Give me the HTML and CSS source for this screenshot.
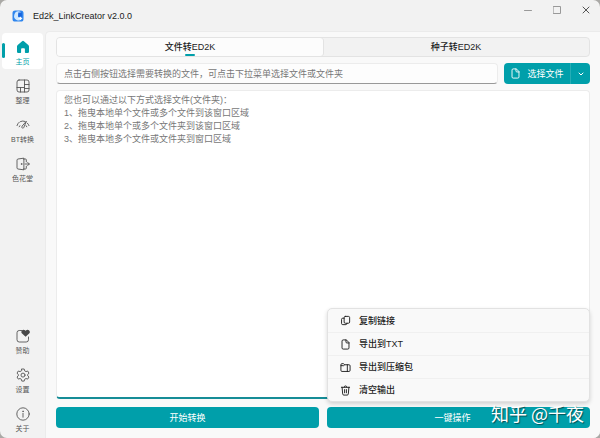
FILE: index.html
```html
<!DOCTYPE html>
<html lang="zh-CN">
<head>
<meta charset="utf-8">
<meta name="viewport" content="width=device-width, initial-scale=1">
<title>Ed2k_LinkCreator v2.0.0</title>
<link rel="stylesheet" href="styles.css">
</head>
<body>
<div class="window">
  <header class="titlebar">
    <svg class="logo" viewBox="0 0 12 12" aria-hidden="true">
      <rect x="0.500" y="0.500" width="11" height="11" rx="2.600" fill="#2f86ee"/>
      <path d="M7.500 1.500A4.500 4.500 0 1 0 10.300 8.500L8.600 7.300H6.200V4.200h2.500V2z" fill="#cfe8ff"/>
      <path d="M6.200 2.600h3.600v4.200H6.200z" fill="#1763dc"/>
      <path d="M8.500 7.200v2.300M6.800 8.300h3" stroke="#fff" stroke-width=".9"/>
    </svg>
    <h1 class="title">Ed2k_LinkCreator v2.0.0</h1>
    <div class="controls">
      <button type="button" class="control" aria-label="最小化"><svg viewBox="0 0 8 8"><path d="M.5 4.500h7" stroke="#999"/></svg></button>
      <button type="button" class="control" aria-label="最大化"><svg viewBox="0 0 8 8"><path d="M.500.500h7v7h-7z" stroke="#999"/></svg></button>
      <button type="button" class="control" aria-label="关闭"><svg viewBox="0 0 8 8"><path d="M1 1l6 6M7 1L1 7" stroke="#555"/></svg></button>
    </div>
  </header>
  <div class="body">
    <nav class="sidebar">
      <button type="button" class="nav active">
        <svg viewBox="0 0 14 14"><path d="M6.100 1.200q.9-.8 1.800 0L12.300 5q.7.600.7 1.400v5.400q0 1.200-1.200 1.200H9.600q-.7 0-.7-.7V9.200q0-.9-.9-.9H6q-.9 0-.9.9v3.100q0 .7-.7.7H2.200Q1 13 1 11.800V6.400q0-.8.7-1.400z" fill="#009faa" stroke="none"/></svg>
        <span>主页</span>
      </button>
      <button type="button" class="nav">
        <svg viewBox="0 0 14 14"><rect x="1" y="1" width="12" height="12" rx="2"/><path d="M8.500 1v12M1 8.500h7.500M4.500 8.500V13M8.500 5.500H13M8.500 9.500H13"/></svg>
        <span>整理</span>
      </button>
      <button type="button" class="nav">
        <svg viewBox="0 0 14 14"><path d="M1 7.600q.7-2.300 2.300-3.500M4.500 3.500q2.200-1 4.500-.1M11.300 5.100q1.200 1 1.700 2.500M3.200 8.800l.7-1.100M10.800 8.800l-.7-1.100M10.200 3.600L7.900 9.300q-.5 1.200-1.500.8-1-.5-.5-1.600z"/></svg>
        <span>BT转换</span>
      </button>
      <button type="button" class="nav">
        <svg viewBox="0 0 14 14"><path d="M7.500 1.200L2 2q-1 .2-1 1.100v7.800q0 .9 1 1.100l5.500.8zM7.500 2h2q.8 0 .8.800v2M7.500 12h2q.8 0 .8-.8v-2M9 7h4.300M11.700 5.400L13.300 7l-1.600 1.600"/><circle cx="5.500" cy="7" r=".4"/></svg>
        <span>色花堂</span>
      </button>
      <button type="button" class="nav lower">
        <svg viewBox="0 0 14 14"><path d="M6 1.500H3.200Q1 1.500 1 3.700v7Q1 13 3.200 13h7q2.300 0 2.300-2.300V8"/><path d="M9.600 7.700L5.800 4.200Q4.800 2.700 6 1.400 7.700 0 9.600 1.800q1.900-1.800 3.600-.4 1.200 1.300.2 2.800z" fill="#484848" stroke="none"/></svg>
        <span>赞助</span>
      </button>
      <button type="button" class="nav low">
        <svg viewBox="0 0 14 14"><path d="M5.800 1h2.400l.4 1.800 1.400.8 1.700-.6 1.300 2.200L11.700 6.400v1.400L13 9l-1.300 2.100-1.700-.6-1.400.8-.4 1.800H5.800l-.4-1.800-1.400-.8-1.700.6L1 9l1.300-1.200V6.400L1 5.200 2.300 3l1.700.6 1.400-.8z"/><circle cx="7" cy="7.100" r="2"/></svg>
        <span>设置</span>
      </button>
      <button type="button" class="nav low">
        <svg viewBox="0 0 14 14"><circle cx="7" cy="7" r="6.200"/><path d="M7 6.300v3.900"/><circle cx="7" cy="4.300" r=".3"/></svg>
        <span>关于</span>
      </button>
    </nav>
    <main class="content">
      <div class="tabs" role="tablist">
        <button type="button" class="tab selected" role="tab" aria-selected="true">文件转ED2K</button>
        <button type="button" class="tab" role="tab" aria-selected="false">种子转ED2K</button>
      </div>
      <div class="picker">
        <input class="path" type="text" aria-label="文件路径" placeholder="点击右侧按钮选择需要转换的文件，可点击下拉菜单选择文件或文件夹">
        <div class="split">
          <button type="button" class="choose">
            <svg viewBox="0 0 12 12"><path d="M6.500 1H3.500Q2.200 1 2.200 2.300v7.400Q2.200 11 3.500 11h5q1.300 0 1.300-1.300V4.300zM6.500 1v2.300q0 1 1 1h2.300"/></svg>
            <span>选择文件</span>
          </button>
          <button type="button" class="more" aria-label="更多"><svg viewBox="0 0 8 8"><path d="M2 3l2 2 2-2"/></svg></button>
        </div>
      </div>
      <textarea class="output" aria-label="输出" placeholder="您也可以通过以下方式选择文件(文件夹)：&#10;1、拖曳本地单个文件或多个文件到该窗口区域&#10;2、拖曳本地单个或多个文件夹到该窗口区域&#10;3、拖曳本地多个文件或文件夹到窗口区域"></textarea>
      <div class="actions">
        <button type="button" class="action">开始转换</button>
        <div class="action-menu">
          <button type="button" class="action with-menu">一键操作</button>
          <div class="menu" role="menu">
            <button type="button" class="item" role="menuitem"><svg viewBox="0 0 12 12"><rect x="4.500" y="1.500" width="6" height="7.500" rx="1.300"/><path d="M4.500 3.500H3q-1.300 0-1.300 1.300v4.400q0 1.300 1.300 1.300h3.500q1 0 1.200-1.500"/></svg>复制链接</button>
            <button type="button" class="item" role="menuitem"><svg viewBox="0 0 12 12"><path d="M6.500 1H3.500Q2.200 1 2.200 2.300v7.400Q2.200 11 3.500 11h5q1.300 0 1.300-1.300V4.300zM6.500 1v2.300q0 1 1 1h2.300"/></svg>导出到TXT</button>
            <button type="button" class="item" role="menuitem"><svg viewBox="0 0 12 12"><path d="M1 4V3q0-1.200 1.200-1.200h1.500L5 3h4.800Q11 3 11 4.200v4.900q0 1.200-1.200 1.200H2.200Q1 10.300 1 9.100V4h3l1-1M8 3v7.300"/></svg>导出到压缩包</button>
            <button type="button" class="item" role="menuitem"><svg viewBox="0 0 12 12"><path d="M1.500 2.500h9M4.500 2.500Q4.500 1 6 1t1.500 1.500M2.300 2.500l.6 7.200Q3 11 4.200 11h3.600Q9 11 9.100 9.700l.6-7.200M5 5v3.500M7 5v3.500"/></svg>清空输出</button>
          </div>
        </div>
      </div>
    </main>
  </div>
  <div class="watermark">知乎 @千夜</div>
</div>
</body>
</html>
```
FILE: styles.css
```css
* {
  box-sizing: border-box;
}

body {
  margin: 0;
  background: #aaa9a6;
  color: #1b1b1b;
  font: 9px/12px "Liberation Sans", "Noto Sans CJK SC", sans-serif;
}

button,
input,
textarea {
  margin: 0;
  padding: 0;
  border: 0;
  background: none;
  color: inherit;
  font: inherit;
}

svg {
  display: block;
  flex: none;
  fill: none;
  stroke: currentColor;
  stroke-linecap: round;
  stroke-linejoin: round;
}

.window {
  position: relative;
  display: flex;
  flex-direction: column;
  min-height: 100vh;
  overflow: hidden;
  border-radius: 7px;
  background: #f2f2f2;
}

.titlebar {
  display: flex;
  align-items: center;
  height: 31px;
  padding-left: 12px;
}

.logo {
  width: 12px;
  height: 12px;
  stroke: none;
}

.title {
  flex: 1;
  margin: 0 0 0 9px;
  font: 9px/12px "Liberation Sans", sans-serif;
}

.controls {
  display: flex;
  align-self: flex-start;
}

.control {
  display: grid;
  place-items: center;
  width: 29px;
  height: 20px;
}

.control svg {
  width: 8px;
  height: 8px;
}

.body {
  display: flex;
  flex: 1;
}

.sidebar {
  display: flex;
  flex-direction: column;
  gap: 3px;
  width: 45px;
  padding: 2px 2px 1px;
}

.nav {
  position: relative;
  display: flex;
  flex-direction: column;
  align-items: center;
  justify-content: center;
  gap: 3px;
  height: 36px;
  padding-top: 4px;
  border-radius: 4px;
  color: #555;
  font-size: 7px;
  line-height: 10px;
}

.nav svg {
  width: 14px;
  height: 14px;
  stroke-width: 0.9;
}

.nav.active {
  background: #fff;
  color: #009faa;
}

.nav.active::before {
  content: "";
  position: absolute;
  left: 0;
  top: 10px;
  width: 3px;
  height: 15px;
  border-radius: 2px;
  background: #009faa;
}

.lower {
  margin-top: auto;
}

.lower,
.low {
  padding-top: 2px;
}

.content {
  display: flex;
  flex: 1;
  flex-direction: column;
  min-width: 0;
  padding: 5px 10px 10px;
  border: 1px solid #ebebeb;
  border-width: 1px 0 0 1px;
  border-top-left-radius: 5px;
  background: #f9f9f9;
}

.tabs {
  display: flex;
  border: 1px solid #e3e3e3;
  border-radius: 4px;
  background: #f2f2f2;
}

.tab {
  position: relative;
  flex: 1;
  height: 18px;
  border-radius: 3px;
  font-weight: 500;
}

.tab.selected {
  background: #fcfcfc;
  box-shadow: 1px 0 0 #e3e3e3;
}

.tab.selected::after {
  content: "";
  position: absolute;
  left: 50%;
  bottom: 0;
  width: 10px;
  height: 2px;
  margin-left: -5px;
  border-radius: 1px;
  background: #009faa;
}

.picker {
  display: flex;
  gap: 6px;
  margin-top: 6px;
}

.path {
  flex: 1;
  min-width: 0;
  height: 21px;
  padding: 0 7px;
  border: 1px solid #ececec;
  border-bottom-color: #999;
  border-radius: 4px;
  background: #fdfdfd;
}

.path::placeholder,
.output::placeholder {
  color: #777;
  opacity: 1;
}

.split {
  display: flex;
  width: 86px;
  border-radius: 4px;
  background: #009faa;
  color: #fff;
}

.choose {
  display: flex;
  flex: 1;
  align-items: center;
  justify-content: center;
  gap: 6px;
}

.choose svg,
.item svg {
  width: 11px;
  height: 11px;
}

.more {
  display: grid;
  place-items: center;
  width: 20px;
  border-left: 1px solid #25adb6;
}

.more svg {
  width: 8px;
  height: 8px;
}

.output {
  display: block;
  flex: 1;
  width: 100%;
  min-height: 120px;
  margin-top: 6px;
  padding: 3px 7px;
  border: 1px solid #ececec;
  border-bottom: 2px solid #168d97;
  border-radius: 4px;
  background: #fff;
  line-height: 13px;
  resize: none;
}

.actions {
  display: flex;
  gap: 8px;
  margin-top: 8px;
}

.actions > * {
  flex: 1;
}

.action-menu {
  position: relative;
}

.action {
  width: 100%;
  height: 21px;
  border-radius: 4px;
  background: #009faa;
  color: #fff;
}

.with-menu {
  padding-right: 12px;
}

.menu {
  position: absolute;
  right: 0;
  bottom: 26px;
  left: 0;
  border: 1px solid #e2e2e2;
  border-radius: 5px;
  background: #f9f9f9;
  box-shadow: 0 2px 4px rgba(0, 0, 0, 0.16);
}

.item {
  display: flex;
  align-items: center;
  gap: 8px;
  width: 100%;
  height: 23px;
  padding-left: 12px;
  font-weight: 500;
}

.item + .item {
  border-top: 1px solid #f0f0f0;
}

.watermark {
  position: absolute;
  right: 16px;
  bottom: 13px;
  color: #fff;
  font: 18px/24px "Noto Sans CJK SC", sans-serif;
  text-shadow: 1px 1px 1px rgba(0, 0, 0, 0.5);
  pointer-events: none;
}
```
